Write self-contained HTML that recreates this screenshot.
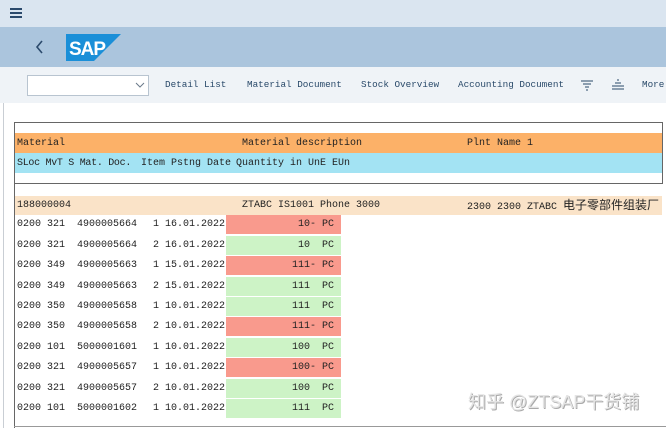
<!DOCTYPE html>
<html><head><meta charset="utf-8"><style>
*{margin:0;padding:0;box-sizing:border-box}
body{width:666px;height:428px;overflow:hidden;background:#fff;font-family:"Liberation Mono","Noto Sans CJK SC",monospace;font-size:10px;color:#222;position:relative}
.a{position:absolute;white-space:pre}
.top{position:absolute;left:0;top:0;width:666px;height:27px;background:#dae5f0}
.hdr{position:absolute;left:0;top:27px;width:666px;height:40px;background:#abc5dd}
.tb{position:absolute;left:0;top:67px;width:666px;height:36px;background:#eff3f7}
.tl{position:absolute;top:79px;color:#2a4a6a;font-size:9.3px;white-space:pre}
.row{position:absolute;left:0;width:662px;height:20px}
.cell{position:absolute;left:226px;width:115px;height:19px}
.r{background:#f99a8d}.g{background:#cdf3c6}
.t{position:absolute;font-size:10px;line-height:20px;white-space:pre}
</style></head><body>
<div class="top"></div>
<div class="a" style="left:10px;top:8px;width:12px;height:2px;background:#2b4a6c;box-shadow:0 4px 0 #2b4a6c,0 8px 0 #2b4a6c"></div>
<div class="hdr"></div>
<svg class="a" style="left:34px;top:39px" width="12" height="16"><path d="M8 2 L3 8 L8 14" stroke="#2b4a6c" stroke-width="1.6" fill="none"/></svg>
<svg class="a" style="left:66px;top:34px" width="55" height="27"><polygon points="0,0 55,0 28,27 0,27" fill="#1a8fd8"/><text x="3" y="21" font-family="Liberation Sans" font-weight="bold" font-size="19" fill="#fff" letter-spacing="-1">SAP</text></svg>
<div class="tb"></div>
<div class="a" style="left:27px;top:75px;width:122px;height:21px;background:#fff;border:1px solid #b8c4d0"></div>
<svg class="a" style="left:135px;top:81px" width="10" height="8"><path d="M1 2 L5 6 L9 2" stroke="#6a7a8a" fill="none"/></svg>
<span class="tl" style="left:165px">Detail List</span><span class="tl" style="left:247px">Material Document</span><span class="tl" style="left:361px">Stock Overview</span><span class="tl" style="left:458px">Accounting Document</span><span class="tl" style="left:642px">More</span>
<svg class="a" style="left:580px;top:79px" width="14" height="12"><path d="M1 2H13M3 5H11M5 8H9M6 11H8" stroke="#2a4a6a"/></svg>
<svg class="a" style="left:611px;top:79px" width="14" height="12"><path d="M6 1H8M4 4H10M1 7H13M1 10H13" stroke="#2a4a6a"/></svg>
<div class="a" style="left:3px;top:103px;width:1px;height:325px;background:#c9ced4"></div>
<div class="a" style="left:14px;top:122px;width:649px;height:62px;border:1px solid #666"></div>
<div class="a" style="left:15px;top:133px;width:647px;height:20px;background:#fcb168"></div>
<div class="a" style="left:15px;top:153px;width:647px;height:20px;background:#a3e3f3"></div>
<span class="t" style="left:17px;top:134px">Material</span><span class="t" style="left:242px;top:134px">Material description</span><span class="t" style="left:467px;top:134px">Plnt Name 1</span>
<span class="t" style="left:17px;top:154px;letter-spacing:-0.3px">SLoc MvT S Mat. Doc.</span><span class="t" style="left:141px;top:154px">Item Pstng Date</span><span class="t" style="left:236px;top:154px">Quantity in UnE EUn</span>
<div class="a" style="left:14px;top:184px;width:1px;height:244px;background:#666"></div>
<div class="a" style="left:14px;top:426px;width:652px;height:1px;background:#999"></div>
<div class="a" style="left:15px;top:196px;width:647px;height:19px;background:#fae3c8"></div>
<span class="t" style="left:17px;top:196px">188000004</span><span class="t" style="left:242px;top:196px">ZTABC IS1001 Phone 3000</span><span class="t" style="left:467px;top:196px">2300 2300 ZTABC <span style="font-size:12px">电子零部件组装厂</span></span>

<div class="row" style="top:215px"><div class="cell r"></div><span class="t" style="left:17px">0200 321</span><span class="t" style="left:77px">4900005664</span><span class="t" style="left:153px">1 16.01.2022</span><span class="t" style="left:286px">  10- PC</span></div>
<div class="row" style="top:236px"><div class="cell g"></div><span class="t" style="left:17px">0200 321</span><span class="t" style="left:77px">4900005664</span><span class="t" style="left:153px">2 16.01.2022</span><span class="t" style="left:286px">  10  PC</span></div>
<div class="row" style="top:256px"><div class="cell r"></div><span class="t" style="left:17px">0200 349</span><span class="t" style="left:77px">4900005663</span><span class="t" style="left:153px">1 15.01.2022</span><span class="t" style="left:286px"> 111- PC</span></div>
<div class="row" style="top:277px"><div class="cell g"></div><span class="t" style="left:17px">0200 349</span><span class="t" style="left:77px">4900005663</span><span class="t" style="left:153px">2 15.01.2022</span><span class="t" style="left:286px"> 111  PC</span></div>
<div class="row" style="top:297px"><div class="cell g"></div><span class="t" style="left:17px">0200 350</span><span class="t" style="left:77px">4900005658</span><span class="t" style="left:153px">1 10.01.2022</span><span class="t" style="left:286px"> 111  PC</span></div>
<div class="row" style="top:317px"><div class="cell r"></div><span class="t" style="left:17px">0200 350</span><span class="t" style="left:77px">4900005658</span><span class="t" style="left:153px">2 10.01.2022</span><span class="t" style="left:286px"> 111- PC</span></div>
<div class="row" style="top:338px"><div class="cell g"></div><span class="t" style="left:17px">0200 101</span><span class="t" style="left:77px">5000001601</span><span class="t" style="left:153px">1 10.01.2022</span><span class="t" style="left:286px"> 100  PC</span></div>
<div class="row" style="top:358px"><div class="cell r"></div><span class="t" style="left:17px">0200 321</span><span class="t" style="left:77px">4900005657</span><span class="t" style="left:153px">1 10.01.2022</span><span class="t" style="left:286px"> 100- PC</span></div>
<div class="row" style="top:379px"><div class="cell g"></div><span class="t" style="left:17px">0200 321</span><span class="t" style="left:77px">4900005657</span><span class="t" style="left:153px">2 10.01.2022</span><span class="t" style="left:286px"> 100  PC</span></div>
<div class="row" style="top:399px"><div class="cell g"></div><span class="t" style="left:17px">0200 101</span><span class="t" style="left:77px">5000001602</span><span class="t" style="left:153px">1 10.01.2022</span><span class="t" style="left:286px"> 111  PC</span></div>
<span class="a" style="left:468px;top:388px;font-family:'Liberation Sans','Noto Sans CJK SC',sans-serif;font-size:18px;color:#e4e4e4;text-shadow:1px 1px 0 #aaa">知乎 @ZTSAP干货铺</span>
</body></html>
